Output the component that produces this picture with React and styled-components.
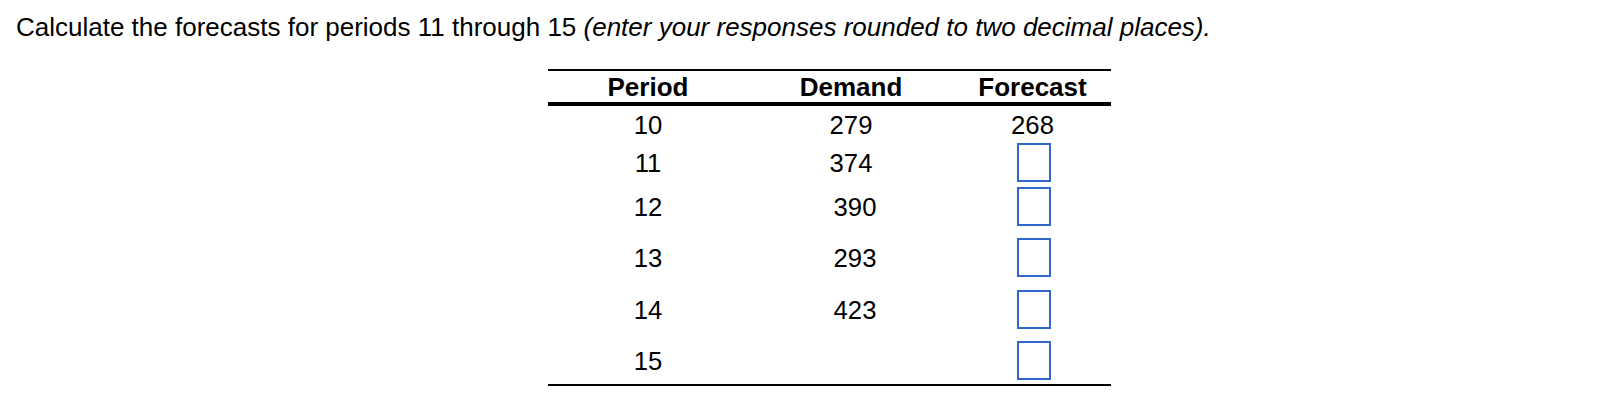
import React from "react";
import styled, { createGlobalStyle } from "styled-components";

const GlobalStyle = createGlobalStyle`
  html, body {
    margin: 0;
    padding: 0;
    background: #ffffff;
  }
  body {
    font-family: "Liberation Sans", Arial, Helvetica, sans-serif;
    color: #000000;
  }
`;

const Page = styled.div`
  padding: 12px 0 0 16px;
`;

const Prompt = styled.p`
  margin: 0;
  font-size: 26px;
  line-height: 30px;
  white-space: nowrap;
`;

const Note = styled.em`
  font-style: italic;
`;

const Table = styled.div`
  margin: 27px 0 0 532px;
  width: 563px;
  border-top: 2px solid #000;
  border-bottom: 2px solid #000;
`;

const Grid = styled.div`
  display: grid;
  grid-template-columns: 200px 206px 157px;
  align-items: center;
`;

const HeaderRow = styled(Grid)`
  height: 31px;
  border-bottom: 4px solid #000;
`;

const HeaderCell = styled.div`
  font-size: 26px;
  font-weight: 700;
  line-height: 30px;
  text-align: center;
  padding-top: 1px;
`;

const Row = styled(Grid)`
  min-height: ${(p) => p.$height || 0}px;
  padding-top: ${(p) => p.$pt || 0}px;
  padding-bottom: ${(p) => p.$pb || 0}px;
`;

const Cell = styled.div`
  font-size: 25.7px;
  line-height: 30px;
  text-align: center;
  padding-left: ${(p) => p.$shift || 0}px;
  display: flex;
  justify-content: center;
  align-items: center;
`;

const AnswerBox = styled.input`
  box-sizing: border-box;
  width: 34px;
  height: 39px;
  margin: 0 0 0 3px;
  padding: 0;
  border: 2px solid #3366cc;
  border-radius: 0;
  background: #ffffff;
  outline: none;
  font: inherit;
  display: block;
`;

const rows = [
  { period: "11", demand: "374", pt: 0, pb: 0 },
  { period: "12", demand: "390", pt: 5, pb: 6, shift: 8 },
  { period: "13", demand: "293", pt: 6, pb: 7, shift: 8 },
  { period: "14", demand: "423", pt: 6, pb: 6, shift: 8 },
  { period: "15", demand: "", pt: 6, pb: 4 },
];

export default function App() {
  return (
    <>
      <GlobalStyle />
      <Page>
        <Prompt>
          Calculate the forecasts for periods 11 through 15{" "}
          <Note>(enter your responses rounded to two decimal places).</Note>
        </Prompt>
        <Table>
          <HeaderRow>
            <HeaderCell>Period</HeaderCell>
            <HeaderCell>Demand</HeaderCell>
            <HeaderCell>Forecast</HeaderCell>
          </HeaderRow>
          <Row $height={37}>
            <Cell>10</Cell>
            <Cell>279</Cell>
            <Cell>268</Cell>
          </Row>
          {rows.map((r) => (
            <Row key={r.period} $pt={r.pt} $pb={r.pb}>
              <Cell>{r.period}</Cell>
              <Cell $shift={r.shift}>{r.demand}</Cell>
              <Cell>
                <AnswerBox type="text" aria-label={`Forecast for period ${r.period}`} />
              </Cell>
            </Row>
          ))}
        </Table>
      </Page>
    </>
  );
}
